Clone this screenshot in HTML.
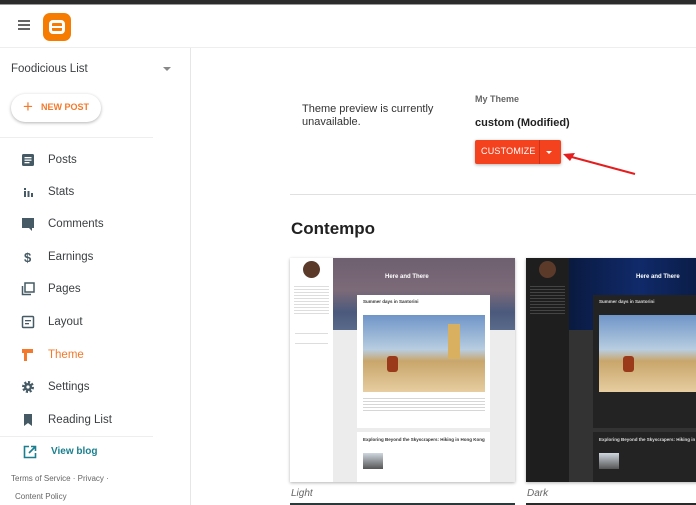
<!DOCTYPE html>
<html><head><meta charset="utf-8">
<style>
*{margin:0;padding:0;box-sizing:border-box}
body{width:696px;height:505px;overflow:hidden;background:#fff;font-family:"Liberation Sans",Arial,sans-serif;position:relative;color:#212121}
.a{position:absolute}
.nav{position:absolute;left:0;font-size:11.5px;color:#3c4043}
.nav span{position:absolute;left:48px;top:0;white-space:nowrap}
.nav svg{position:absolute;left:21px;top:-1px}
</style></head><body>
<div class="a" style="left:0;top:0;width:696px;height:4px;background:#2b2b2b"></div>
<div class="a" style="left:0;top:4px;width:696px;height:1px;background:#999"></div>
<div class="a" style="left:0;top:47px;width:696px;height:1px;background:#eee"></div>
<div class="a" style="left:18px;top:20px;width:12px;height:2px;background:#666"></div>
<div class="a" style="left:18px;top:24px;width:12px;height:2px;background:#666"></div>
<div class="a" style="left:18px;top:28px;width:12px;height:2px;background:#666"></div>
<div class="a" style="left:43px;top:13px;width:28px;height:28px;background:#f57c00;border-radius:7px"></div>
<div class="a" style="left:49px;top:20px;width:16px;height:14px;border:3px solid #fff;border-radius:4px"></div>
<div class="a" style="left:52px;top:26px;width:10px;height:2px;background:#fff"></div>
<div class="a" style="left:190px;top:48px;width:1px;height:457px;background:#e6e6e6"></div>
<div class="a" style="left:11px;top:63px;font-size:11.5px;color:#3c4043">Foodicious List</div>
<div class="a" style="left:163px;top:67px;width:0;height:0;border-left:4px solid transparent;border-right:4px solid transparent;border-top:4px solid #888"></div>
<div class="a" style="left:11px;top:94px;width:90px;height:28px;border-radius:14px;background:#fff;box-shadow:0 1px 3px rgba(0,0,0,.3)"></div>
<div class="a" style="left:23px;top:99px;font-size:17px;color:#f4792b;line-height:15px">+</div>
<div class="a" style="left:41px;top:102px;font-size:9px;font-weight:bold;color:#f4792b">NEW POST</div>
<div class="a" style="left:0;top:137px;width:153px;height:1px;background:#eee"></div>

<div class="nav" style="top:154px"><svg width="14" height="14"><rect x="1" y="1" width="12" height="12" rx="1.5" fill="#455a64"/><rect x="3.5" y="4" width="7" height="1.3" fill="#fff"/><rect x="3.5" y="6.5" width="7" height="1.3" fill="#fff"/><rect x="3.5" y="9" width="5" height="1.3" fill="#fff"/></svg><span>Posts</span></div>
<div class="nav" style="top:186px"><svg width="14" height="14"><rect x="3" y="3" width="2" height="2" fill="#455a64"/><rect x="3" y="6" width="2" height="6" fill="#455a64"/><rect x="6.5" y="6" width="2" height="6" fill="#455a64"/><rect x="10" y="8" width="2" height="4" fill="#455a64"/></svg><span>Stats</span></div>
<div class="nav" style="top:218px"><svg width="14" height="14"><path d="M1 1h12v10h-2v3l-3-3H1z" fill="#455a64"/></svg><span>Comments</span></div>
<div class="nav" style="top:251px"><svg width="14" height="14"><text x="3" y="12" font-size="13" font-weight="bold" fill="#455a64" font-family="Liberation Sans">$</text></svg><span>Earnings</span></div>
<div class="nav" style="top:283px"><svg width="14" height="14"><rect x="4" y="1" width="9" height="9" fill="none" stroke="#455a64" stroke-width="1.5"/><path d="M1.5 4v8.5h8.5" fill="none" stroke="#455a64" stroke-width="1.5"/></svg><span>Pages</span></div>
<div class="nav" style="top:316px"><svg width="14" height="14"><rect x="1.5" y="1.5" width="11" height="11" rx="1" fill="none" stroke="#455a64" stroke-width="1.5"/><rect x="4" y="5" width="6" height="1.3" fill="#455a64"/><rect x="4" y="8" width="4" height="1.3" fill="#455a64"/></svg><span>Layout</span></div>
<div class="nav" style="top:349px;color:#f4792b"><svg width="14" height="14"><path d="M1 1h11v4H6v8H3V5H1z" fill="#f4792b"/></svg><span>Theme</span></div>
<div class="nav" style="top:381px"><svg width="14" height="14"><circle cx="7" cy="7" r="4.5" fill="none" stroke="#455a64" stroke-width="3" stroke-dasharray="2 1.5"/><circle cx="7" cy="7" r="4" fill="#455a64"/><circle cx="7" cy="7" r="1.6" fill="#fff"/></svg><span>Settings</span></div>
<div class="nav" style="top:414px"><svg width="14" height="14"><path d="M3 1h8v12l-4-3-4 3z" fill="#455a64"/></svg><span>Reading List</span></div>
<div class="a" style="left:0;top:436px;width:153px;height:1px;background:#eee"></div>
<div class="nav" style="top:446px;color:#1a7f8e;font-weight:bold;font-size:10px"><svg width="14" height="14" style="left:23px"><path d="M6 1.5H1.5v11h11V8" fill="none" stroke="#1a7f8e" stroke-width="1.6"/><path d="M8 1.5h4.5V6M12.5 1.5L6 8" fill="none" stroke="#1a7f8e" stroke-width="1.6"/></svg><span style="left:51px">View blog</span></div>
<div class="a" style="left:11px;top:474px;font-size:8px;color:#666">Terms of Service · Privacy ·</div>
<div class="a" style="left:15px;top:492px;font-size:8px;color:#666">Content Policy</div>

<div class="a" style="left:302px;top:103px;font-size:11px;color:#333;line-height:13px">Theme preview is currently<br>unavailable.</div>
<div class="a" style="left:475px;top:94px;font-size:9px;color:#666;font-weight:bold">My Theme</div>
<div class="a" style="left:475px;top:117px;font-size:11px;font-weight:bold;color:#212121">custom (Modified)</div>
<div class="a" style="left:475px;top:140px;width:86px;height:24px;background:#f4411e;border-radius:2px;box-shadow:0 1px 3px rgba(0,0,0,.3)"></div>
<div class="a" style="left:539px;top:140px;width:1px;height:24px;background:#c9331a"></div>
<div class="a" style="left:481px;top:146px;font-size:9px;color:#fff;letter-spacing:.2px">CUSTOMIZE</div>
<div class="a" style="left:546px;top:151px;border-left:3px solid transparent;border-right:3px solid transparent;border-top:3px solid #fff"></div>
<svg class="a" style="left:560px;top:148px" width="80" height="30"><path d="M75 26L8 8" stroke="#e41e1e" stroke-width="2"/><path d="M3 6l12 -1l-5 8z" fill="#e41e1e"/></svg>
<div class="a" style="left:290px;top:194px;width:406px;height:1px;background:#e0e0e0"></div>
<div class="a" style="left:291px;top:219px;font-size:17px;font-weight:bold;color:#212121">Contempo</div>

<div class="a" style="left:290px;top:258px;width:225px;height:224px;background:#ececec;box-shadow:0 1px 3px rgba(0,0,0,.3);overflow:hidden">
 <div class="a" style="left:43px;top:0;width:182px;height:72px;background:linear-gradient(180deg,#6e6070 0%,#7c6a78 45%,#4b5a7c 75%,#5a6a8a 100%)"></div>
 <div class="a" style="left:0;top:0;width:43px;height:224px;background:#fff"></div>
 <div class="a" style="left:13px;top:3px;width:17px;height:17px;border-radius:50%;background:#5b3a2a"></div>
 <div class="a" style="left:4px;top:28px;width:35px;height:28px;background:repeating-linear-gradient(#ddd 0 1px,#fff 1px 3px)"></div>
 <div class="a" style="left:5px;top:75px;width:33px;height:1px;background:#ddd"></div>
 <div class="a" style="left:5px;top:85px;width:33px;height:1px;background:#ddd"></div>
 <div class="a" style="left:95px;top:16px;font-size:6px;color:#fff;font-weight:bold">Here and There</div>
 <div class="a" style="left:67px;top:37px;width:133px;height:133px;background:#fff"></div>
 <div class="a" style="left:73px;top:41px;font-size:4.5px;font-weight:bold;color:#333">Summer days in Santorini</div>
 <div class="a" style="left:73px;top:57px;width:122px;height:77px;background:linear-gradient(180deg,#6f95c8 0%,#b8cde0 45%,#c9a66b 60%,#e6cda0 100%)"></div>
 <div class="a" style="left:158px;top:66px;width:12px;height:35px;background:#d9b060"></div>
 <div class="a" style="left:97px;top:98px;width:11px;height:16px;background:#9a3a1a;border-radius:3px"></div>
 <div class="a" style="left:73px;top:140px;width:122px;height:14px;background:repeating-linear-gradient(#d6d6d6 0 1px,#fff 1px 3px)"></div>
 <div class="a" style="left:67px;top:174px;width:133px;height:50px;background:#fff"></div>
 <div class="a" style="left:73px;top:179px;font-size:4.5px;font-weight:bold;color:#333">Exploring Beyond the Skyscrapers: Hiking in Hong Kong</div>
 <div class="a" style="left:73px;top:195px;width:20px;height:16px;background:linear-gradient(#cfd8e0,#555)"></div>
</div>
<div class="a" style="left:291px;top:488px;font-size:10px;font-style:italic;color:#666">Light</div>

<div class="a" style="left:526px;top:258px;width:175px;height:224px;background:#333;box-shadow:0 1px 3px rgba(0,0,0,.3);overflow:hidden">
 <div class="a" style="left:43px;top:0;width:140px;height:72px;background:linear-gradient(90deg,#0a1a40,#102a6a,#0a1a40)"></div>
 <div class="a" style="left:0;top:0;width:43px;height:224px;background:#1e1e1e"></div>
 <div class="a" style="left:13px;top:3px;width:17px;height:17px;border-radius:50%;background:#5b3a2a"></div>
 <div class="a" style="left:4px;top:28px;width:35px;height:28px;background:repeating-linear-gradient(#444 0 1px,#1e1e1e 1px 3px)"></div>
 <div class="a" style="left:110px;top:16px;font-size:6px;color:#fff;font-weight:bold">Here and There</div>
 <div class="a" style="left:67px;top:37px;width:110px;height:133px;background:#232323"></div>
 <div class="a" style="left:73px;top:41px;font-size:4.5px;font-weight:bold;color:#ddd">Summer days in Santorini</div>
 <div class="a" style="left:73px;top:57px;width:110px;height:77px;background:linear-gradient(180deg,#6f95c8 0%,#b8cde0 45%,#c9a66b 60%,#e6cda0 100%)"></div>
 <div class="a" style="left:97px;top:98px;width:11px;height:16px;background:#9a3a1a;border-radius:3px"></div>
 <div class="a" style="left:67px;top:174px;width:110px;height:50px;background:#232323"></div>
 <div class="a" style="left:73px;top:179px;font-size:4.5px;font-weight:bold;color:#ddd;white-space:nowrap">Exploring Beyond the Skyscrapers: Hiking in Hong Kong</div>
 <div class="a" style="left:73px;top:195px;width:20px;height:16px;background:linear-gradient(#cfd8e0,#555)"></div>
</div>
<div class="a" style="left:527px;top:488px;font-size:10px;font-style:italic;color:#666">Dark</div>
<div class="a" style="left:290px;top:503px;width:225px;height:2px;background:#2a3a3a"></div>
<div class="a" style="left:526px;top:503px;width:170px;height:2px;background:#2a2a2a"></div>
</body></html>
